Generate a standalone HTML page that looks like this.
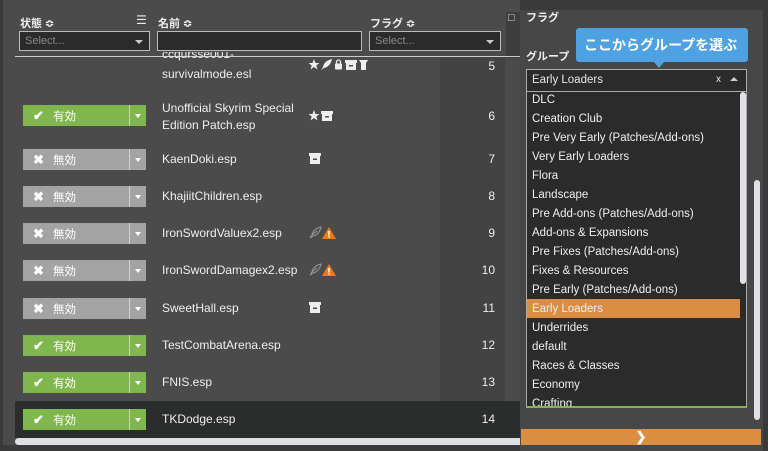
<!DOCTYPE html>
<html><head><meta charset="utf-8"><style>
*{box-sizing:border-box;margin:0;padding:0}
body{width:768px;height:451px;overflow:hidden;background:#3a3a3a;font-family:"Liberation Sans","Noto Sans CJK JP",sans-serif;color:#e6e6e6;position:relative;font-size:12px}
.a{position:absolute}
.tbl{left:3px;top:0;width:517px;height:445px;background:#4b4b4b}
.num{left:440px;top:57px;width:65px;height:344px;background:#434343}
.hd{font-size:11px;font-weight:bold;color:#eee}
.inp{border:1px solid #bbb;background:#2b2b2b;height:20px;color:#888;font-size:11px;padding:3px 5px}
.btn{left:23px;width:123px;height:21px;font-size:11.5px;color:#fff}
.btn .m{position:absolute;left:0;top:0;width:106px;height:21px;padding:3px 0 0 10px}
.btn .m b{font-size:13px;display:inline-block;width:20px}
.btn .d{position:absolute;left:106px;top:0;width:17px;height:21px;border-left:1px solid rgba(255,255,255,.5)}
.btn .d:after{content:"";position:absolute;left:5px;top:9px;border:3px solid transparent;border-top:4px solid #fff}
.on{background:#7fb74e}.off{background:#a3a3a3}
.nm{left:162px;font-size:12px;color:#eee}
.n{left:440px;width:55px;text-align:right;font-size:12px;color:#eee}
.li{position:absolute;left:5px;font-size:11.5px;color:#eee}
svg{position:absolute}
</style></head><body>
<div class="a tbl"></div>
<div class="a num"></div>
<div class="a hd" style="left:20px;top:15px">状態 ≎</div>
<div class="a hd" style="left:136px;top:13px;font-weight:normal;font-size:12px">☰</div>
<div class="a hd" style="left:158px;top:15px">名前 ≎</div>
<div class="a hd" style="left:370px;top:15px">フラグ ≎</div>
<div class="a" style="left:506px;top:12px;width:14px;height:46px;background:#3e3e3e;font-size:11px;font-weight:bold;padding-left:2px">□</div>
<div class="a inp" style="left:19px;top:31px;width:131px">Select...<span style="position:absolute;right:6px;top:8px;border:4px solid transparent;border-top:4px solid #ccc"></span></div>
<div class="a inp" style="left:157px;top:31px;width:205px"></div>
<div class="a inp" style="left:369px;top:31px;width:132px">Select...<span style="position:absolute;right:6px;top:8px;border:4px solid transparent;border-top:4px solid #ccc"></span></div>
<div class="a" style="left:15px;top:56px;width:505px;height:1px;background:#ccc"></div>

<div class="a nm" style="top:52px;line-height:16px;height:10px;overflow:hidden;width:200px"><span style="position:relative;top:-6px">ccqursse001-</span></div>
<div class="a nm" style="top:67px">survivalmode.esl</div>
<svg style="left:308px;top:58px" width="70" height="14" viewBox="0 0 70 14" fill="#eee">
<polygon points="6,1 7.5,5 11.5,5 8.3,7.5 9.5,11.5 6,9 2.5,11.5 3.7,7.5 0.5,5 4.5,5"/>
<path d="M13 12 L15 9 C16 4 20 2 24 1 C23 5 21 9 16 10 Z"/>
<rect x="27" y="5.5" width="7" height="6" rx="1"/><path d="M28.5 6 V4 a2 2 0 0 1 4 0 V6" fill="none" stroke="#eee" stroke-width="1.3"/>
<rect x="37" y="2" width="12" height="3"/><rect x="38" y="5" width="10" height="7"/><rect x="41" y="7" width="4" height="1.5" fill="#4b4b4b"/>
<path d="M51 2 H60 L58 5 V12 H53 V5 Z"/>
</svg>
<div class="a n" style="top:59px">5</div>

<div class="a btn" style="top:105px"><div class="m on"><b>✔</b>有効</div><div class="d on"></div></div>
<div class="a nm" style="top:100px;line-height:17px">Unofficial Skyrim Special<br>Edition Patch.esp</div>
<svg style="left:308px;top:109px" width="30" height="14" viewBox="0 0 30 14" fill="#eee">
<polygon points="6,1 7.5,5 11.5,5 8.3,7.5 9.5,11.5 6,9 2.5,11.5 3.7,7.5 0.5,5 4.5,5"/>
<rect x="13" y="2" width="12" height="3"/><rect x="14" y="5" width="10" height="7"/><rect x="17" y="7" width="4" height="1.5" fill="#4b4b4b"/>
</svg>
<div class="a n" style="top:109px">6</div>

<div class="a btn" style="top:149px"><div class="m off"><b>✖</b>無効</div><div class="d off"></div></div>
<div class="a nm" style="top:152px">KaenDoki.esp</div>
<svg style="left:308px;top:152px" width="14" height="14" viewBox="0 0 14 14" fill="#eee"><rect x="1" y="1" width="12" height="3"/><rect x="2" y="4" width="10" height="8"/><rect x="5" y="6.5" width="4" height="1.5" fill="#4b4b4b"/></svg>
<div class="a n" style="top:152px">7</div>

<div class="a btn" style="top:186px"><div class="m off"><b>✖</b>無効</div><div class="d off"></div></div>
<div class="a nm" style="top:189px">KhajiitChildren.esp</div>
<div class="a n" style="top:189px">8</div>

<div class="a btn" style="top:223px"><div class="m off"><b>✖</b>無効</div><div class="d off"></div></div>
<div class="a nm" style="top:226px">IronSwordValuex2.esp</div>
<svg style="left:308px;top:226px" width="30" height="14" viewBox="0 0 30 14"><path d="M2 12 L4 9 C5 4 9 2 13 1 C12 5 10 9 5 10 Z M4 9 L9 5" fill="none" stroke="#999" stroke-width="1"/><polygon points="21,1 28,13 14,13" fill="#f07a10"/><rect x="20.3" y="5" width="1.4" height="4.5" fill="#fff"/><rect x="20.3" y="10.3" width="1.4" height="1.4" fill="#fff"/></svg>
<div class="a n" style="top:226px">9</div>

<div class="a btn" style="top:260px"><div class="m off"><b>✖</b>無効</div><div class="d off"></div></div>
<div class="a nm" style="top:263px">IronSwordDamagex2.esp</div>
<svg style="left:308px;top:263px" width="30" height="14" viewBox="0 0 30 14"><path d="M2 12 L4 9 C5 4 9 2 13 1 C12 5 10 9 5 10 Z M4 9 L9 5" fill="none" stroke="#999" stroke-width="1"/><polygon points="21,1 28,13 14,13" fill="#f07a10"/><rect x="20.3" y="5" width="1.4" height="4.5" fill="#fff"/><rect x="20.3" y="10.3" width="1.4" height="1.4" fill="#fff"/></svg>
<div class="a n" style="top:263px">10</div>

<div class="a btn" style="top:298px"><div class="m off"><b>✖</b>無効</div><div class="d off"></div></div>
<div class="a nm" style="top:301px">SweetHall.esp</div>
<svg style="left:308px;top:301px" width="14" height="14" viewBox="0 0 14 14" fill="#eee"><rect x="1" y="1" width="12" height="3"/><rect x="2" y="4" width="10" height="8"/><rect x="5" y="6.5" width="4" height="1.5" fill="#4b4b4b"/></svg>
<div class="a n" style="top:301px">11</div>

<div class="a btn" style="top:335px"><div class="m on"><b>✔</b>有効</div><div class="d on"></div></div>
<div class="a nm" style="top:338px">TestCombatArena.esp</div>
<div class="a n" style="top:338px">12</div>

<div class="a btn" style="top:372px"><div class="m on"><b>✔</b>有効</div><div class="d on"></div></div>
<div class="a nm" style="top:375px">FNIS.esp</div>
<div class="a n" style="top:375px">13</div>

<div class="a" style="left:15px;top:401px;width:505px;height:37px;background:#2b2c2c"></div>
<div class="a btn" style="top:409px"><div class="m on"><b>✔</b>有効</div><div class="d on"></div></div>
<div class="a nm" style="top:412px">TKDodge.esp</div>
<div class="a n" style="top:412px">14</div>
<div class="a" style="left:15px;top:438px;width:510px;height:7px;border-radius:4px;background:#dfe1e4"></div>

<div class="a" style="left:520px;top:10px;width:243px;height:441px;background:#474747"></div>
<div class="a hd" style="left:526px;top:9px">フラグ</div>
<div class="a hd" style="left:526px;top:48px">グループ</div>
<div class="a" style="left:576px;top:28px;width:172px;height:34px;background:#4fa2e2;border-radius:3px;color:#fff;font-size:14px;font-weight:bold;padding:7px 0 0 8px;white-space:nowrap">ここからグループを選ぶ</div>
<div class="a" style="left:654px;top:62px;border:5px solid transparent;border-top:6px solid #4fa2e2"></div>
<div class="a" style="left:526px;top:69px;width:221px;height:23px;background:#2b2b2b;border:1px solid #aaa;font-size:11.5px;padding:4px 5px">Early Loaders<span style="position:absolute;left:189px;top:4px;font-size:10px">x</span><span style="position:absolute;left:203px;top:7px;border:4px solid transparent;border-bottom:4px solid #ccc;border-top:0"></span></div>
<div class="a" style="left:526px;top:92px;width:221px;height:316px;background:#2b2b2b;border:1px solid #aaa;border-top:0;border-bottom:2px solid #7fb74e;overflow:hidden">
<div class="li" style="top:2px">DLC</div>
<div class="li" style="top:21px">Creation Club</div>
<div class="li" style="top:40px">Pre Very Early (Patches/Add-ons)</div>
<div class="li" style="top:59px">Very Early Loaders</div>
<div class="li" style="top:78px">Flora</div>
<div class="li" style="top:97px">Landscape</div>
<div class="li" style="top:116px">Pre Add-ons (Patches/Add-ons)</div>
<div class="li" style="top:135px">Add-ons &amp; Expansions</div>
<div class="li" style="top:154px">Pre Fixes (Patches/Add-ons)</div>
<div class="li" style="top:173px">Fixes &amp; Resources</div>
<div class="li" style="top:192px">Pre Early (Patches/Add-ons)</div>
<div style="position:absolute;left:0;top:207px;width:213px;height:19px;background:#d98e44"></div>
<div class="li" style="top:211px">Early Loaders</div>
<div class="li" style="top:230px">Underrides</div>
<div class="li" style="top:249px">default</div>
<div class="li" style="top:268px">Races &amp; Classes</div>
<div class="li" style="top:287px">Economy</div>
<div class="li" style="top:306px">Crafting</div>
<div style="position:absolute;left:213px;top:0;width:6px;height:192px;background:#dfe1e4;border-radius:3px"></div>
</div>
<div class="a" style="left:754px;top:180px;width:6px;height:240px;background:#dfe1e4;border-radius:3px"></div>
<div class="a" style="left:521px;top:429px;width:240px;height:16px;background:#d98e44;color:#fff;text-align:center;font-weight:bold;font-size:13px;line-height:16px">❯</div>
</body></html>
